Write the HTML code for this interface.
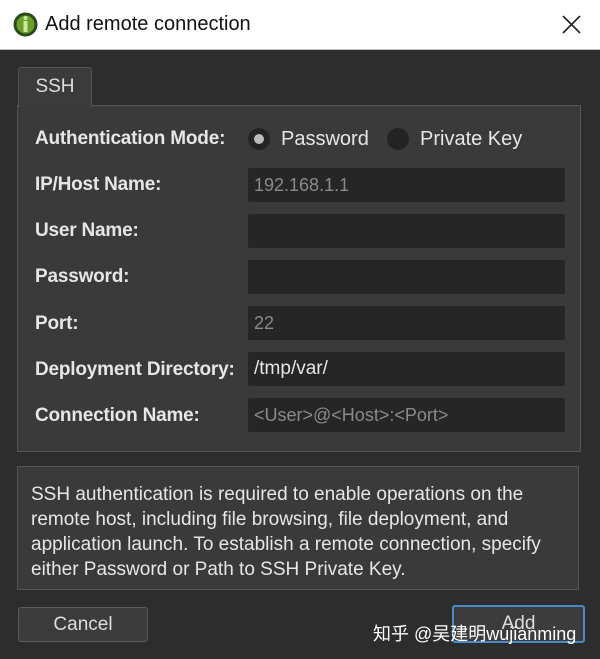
<!DOCTYPE html>
<html><head><style>
body{margin:0;width:600px;height:659px;background:#2d2d2d;font-family:"Liberation Sans",Arial,sans-serif;position:relative;overflow:hidden}
.tb{position:absolute;left:0;top:0;width:600px;height:49px;background:#fff;border-bottom:1px solid #bbb}
.tt{position:absolute;left:45px;top:13px;font-size:20px;color:#111}
.tab{position:absolute;left:18px;top:67px;width:72px;height:39px;background:#3b3b3b;border:1px solid #555;border-bottom:none;border-radius:3px 3px 0 0;color:#ddd;font-size:19px;line-height:38px;text-align:center;z-index:2}
.panel{position:absolute;left:17px;top:105px;width:562px;height:345px;background:#3a3a3a;border:1px solid #555}
.lab{position:absolute;left:35px;color:#e6e6e6;font-weight:bold;font-size:19px;letter-spacing:-0.2px}
.inp{position:absolute;left:248px;width:317px;height:34px;background:#262626;border-radius:2px;color:#8a8a8a;font-size:18px;line-height:34px;padding-left:6px;box-sizing:border-box}
.info{position:absolute;left:17px;top:466px;width:562px;height:124px;background:#3a3a3a;border:1px solid #555;color:#e6e6e6;font-size:19px;line-height:25px;padding:15px 0 0 13px;box-sizing:border-box;white-space:nowrap}
.btn{position:absolute;background:#3c3c3c;border:1px solid #5a5a5a;border-radius:3px;color:#ddd;font-size:19px;text-align:center;line-height:33px}
.rad{position:absolute;width:22px;height:22px;border-radius:50%;background:#242424}
</style></head><body>
<div class="tb">
<svg style="position:absolute;left:13px;top:12px" width="25" height="25" viewBox="0 0 25 25"><circle cx="12.5" cy="12.5" r="12" fill="#2a4a1a"/><circle cx="12.5" cy="12.5" r="9" fill="#6aa02a"/><rect x="10.5" y="9" width="4" height="11" fill="#cfe8a0"/><circle cx="12.5" cy="6" r="2" fill="#cfe8a0"/></svg>
<div class="tt">Add remote connection</div>
<svg style="position:absolute;left:562px;top:15px" width="19" height="19"><path d="M1 1L18 18M18 1L1 18" stroke="#222" stroke-width="1.6"/></svg>
</div>
<div class="tab">SSH</div>
<div class="panel"></div>
<div class="lab" style="top:128px">Authentication Mode:</div>
<div class="rad" style="left:248px;top:128px"><div style="position:absolute;left:6px;top:6px;width:10px;height:10px;border-radius:50%;background:#bbb"></div></div>
<div style="position:absolute;left:281px;top:128px;color:#e6e6e6;font-size:20px">Password</div>
<div class="rad" style="left:387px;top:128px"></div>
<div style="position:absolute;left:420px;top:128px;color:#e6e6e6;font-size:20px">Private Key</div>
<div class="lab" style="top:174px">IP/Host Name:</div><div class="inp" style="top:168px">192.168.1.1</div>
<div class="lab" style="top:220px">User Name:</div><div class="inp" style="top:214px"></div>
<div class="lab" style="top:266px">Password:</div><div class="inp" style="top:260px"></div>
<div class="lab" style="top:313px">Port:</div><div class="inp" style="top:306px">22</div>
<div class="lab" style="top:359px">Deployment Directory:</div><div class="inp" style="top:352px;color:#e6e6e6;font-size:19px">/tmp/var/</div>
<div class="lab" style="top:405px">Connection Name:</div><div class="inp" style="top:398px">&lt;User&gt;@&lt;Host&gt;:&lt;Port&gt;</div>
<div class="info">SSH authentication is required to enable operations on the<br>remote host, including file browsing, file deployment, and<br>application launch. To establish a remote connection, specify<br>either Password or Path to SSH Private Key.</div>
<div class="btn" style="left:18px;top:607px;width:128px;height:33px">Cancel</div>
<div class="btn" style="left:452px;top:605px;width:129px;height:34px;border:2px solid #4a8ac8">Add</div>
<div style="position:absolute;left:373px;top:620px;color:#fff;font-size:18px;font-family:'Liberation Sans','Noto Sans CJK SC',sans-serif">知乎 @吴建明wujianming</div>
</body></html>
